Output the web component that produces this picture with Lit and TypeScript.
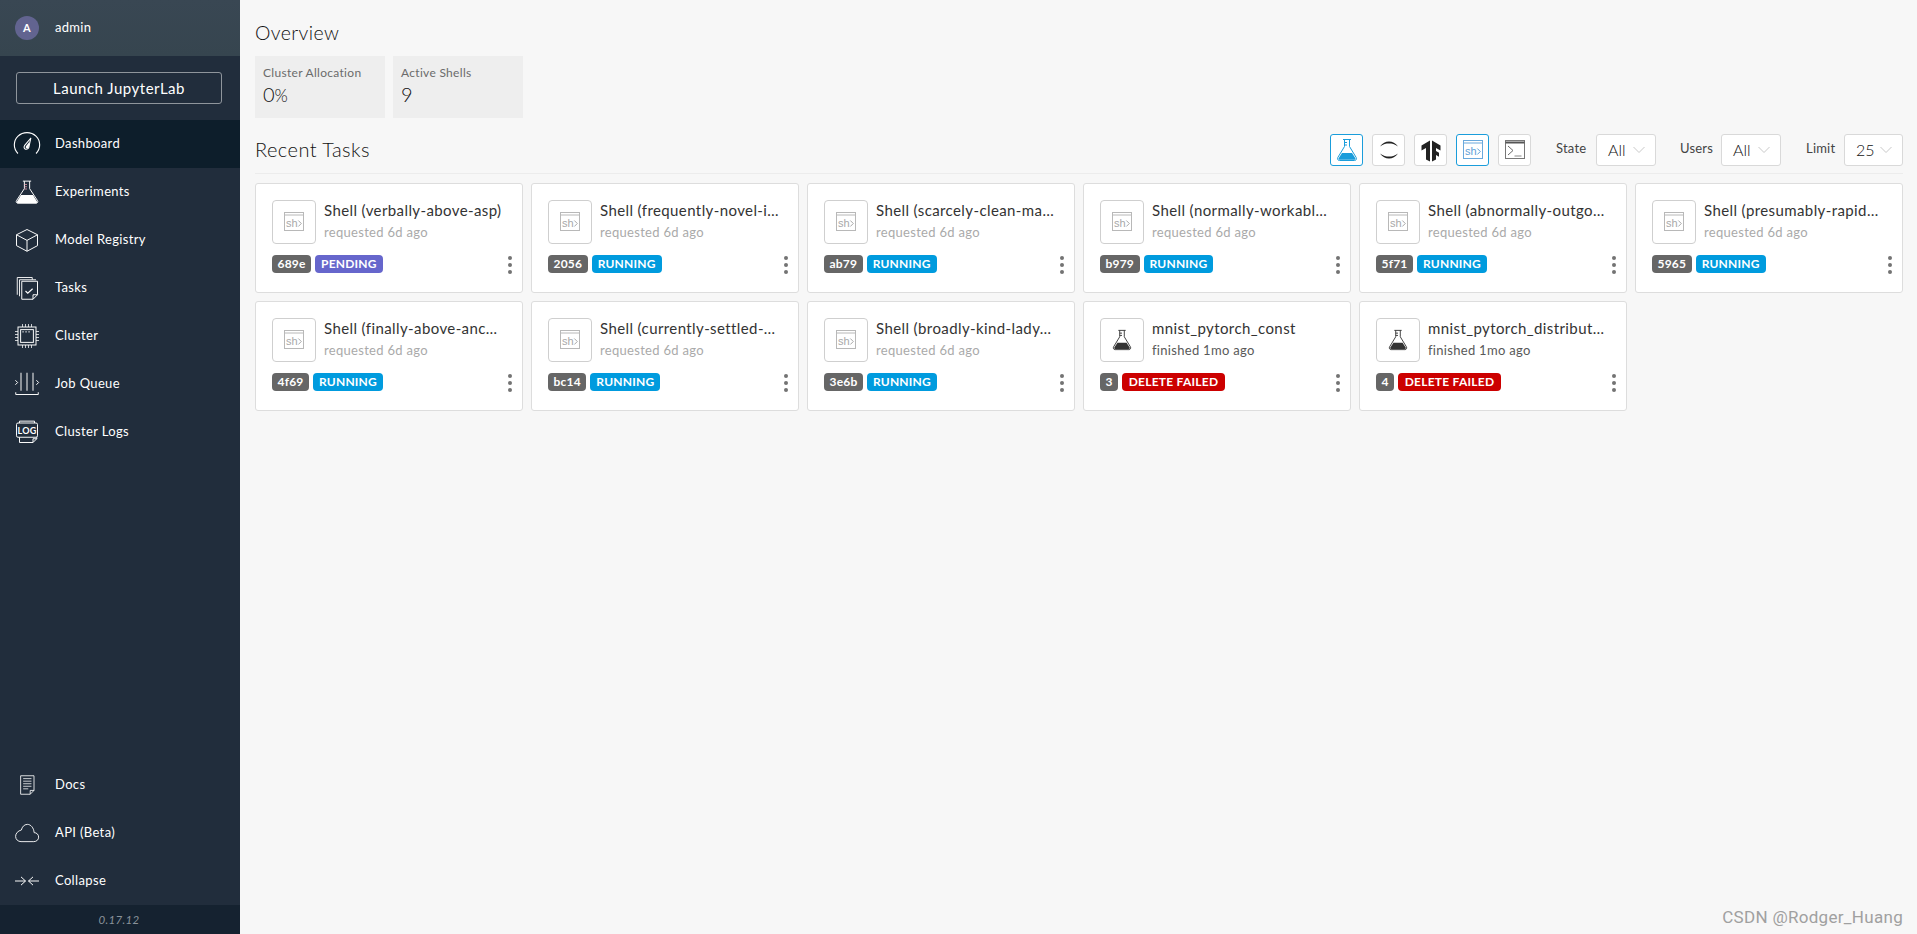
import { LitElement, html, css, svg } from "lit";
import { customElement } from "lit/decorators.js";

const navIcons: Record<string, any> = {
  dashboard: svg`<path d="M5.500 27C2.800 24.300 1.300 20.800 1.300 17 1.300 8.900 7.900 2.800 16 2.800S30.700 8.900 30.700 17c0 3.800-1.500 7.300-4.200 10" fill="none" stroke="#fff" stroke-width="1.300"/><path d="M20.500 9l-2.300 10.500c-.5 2-2.300 3-3.900 2.500-1.700-.6-2.200-2.400-1.200-4.100z" fill="none" stroke="#fff" stroke-width="1.200"/><path d="M19 13l-1 6.500c-.4 1.400-1.500 2-2.500 1.700-1-.4-1.300-1.300-.7-2.500z" fill="#fff"/>`,
  experiments: svg`<path d="M10.500 1.500h11M12.500 1.500v10L2 27.500c-1 1.700 0 3.500 2 3.500h24c2 0 3-1.800 2-3.500L19.500 11.500v-10" fill="none" stroke="#fff" stroke-width="1.300"/><path d="M8 20h16l5.500 9c.4.800 0 1.500-1 1.500h-25c-1 0-1.400-.7-1-1.500z" fill="#fff"/><path d="M12.500 6h3.500M12.500 9h3.500M12.500 12h3.500" stroke="#f0a0b0" stroke-width="1"/>`,
  model: svg`<path d="M16 2L30 9v14.500L16 31 2 23.500V9zM2 9l14 7.500L30 9M16 16.500V31" fill="none" stroke="#fff" stroke-width="1.300" stroke-linejoin="round"/>`,
  tasks: svg`<path d="M3 25V2h20v3M6 27V5h22" fill="none" stroke="#fff" stroke-width="1.200"/><path d="M9 7h21v18l-6 6H9zM30 25h-6v6" fill="none" stroke="#fff" stroke-width="1.300"/><path d="M14 20l3 3 6.500-6" fill="none" stroke="#fff" stroke-width="1.500"/>`,
  cluster: svg`<rect x="4" y="4" width="24" height="24" fill="none" stroke="#fff" stroke-width="1.300"/><rect x="7.500" y="7.500" width="17" height="17" fill="none" stroke="#fff" stroke-width="1.300"/><path d="M9.500 10.500h2.500M13.500 10.500h2.500M17.500 10.500h2.500M10 0v4M14 0v4M18 0v4M22 0v4M10 28v4M14 28v4M18 28v4M22 28v4M0 10h4M0 14h4M0 18h4M0 22h4M28 10h4M28 14h4M28 18h4M28 22h4" fill="none" stroke="#fff" stroke-width="1"/>`,
  queue: svg`<path d="M8 1v24M16 1v24M24 1v24" fill="none" stroke="#fff" stroke-width="1.300"/><path d="M1 27v3h30v-3M.5 11l3 3-3 3M28.500 11l3 3-3 3" fill="none" stroke="#fff" stroke-width="1.300"/>`,
  logs: svg`<path d="M6 4V1.500h20V4M6 23v7h18l5-5v-2M29 25h-5v5" fill="none" stroke="#fff" stroke-width="1.300"/><rect x="2" y="4" width="28" height="19" rx="2" fill="none" stroke="#fff" stroke-width="1.300"/><text x="16" y="18" font-size="12" font-weight="700" text-anchor="middle" fill="#fff" font-family="Lato, sans-serif">LOG</text>`,
  docs: svg`<path d="M6 1.500h21v23l-6 6H6zM27 24.500h-6v6" fill="none" stroke="#fff" stroke-width="1.300"/><path d="M10 6h13M10 10h13M10 14h13M10 18h13M10 22h8" stroke="#fff" stroke-width="1.200"/>`,
  api: svg`<path d="M8 27.500h17c4 0 6.500-2.700 6.500-6 0-3.500-2.700-6-6-6C25 9 21 4.500 16.500 4.500 12 4.500 9.500 8 8.500 12 4 13 .8 16.500.8 20.500.8 24.500 4 27.500 8 27.500z" fill="none" stroke="#fff" stroke-width="1.200"/>`,
  collapse: svg`<path d="M0 16h14M8 10.500l6 5.500-6 5.500M32 16H18M24 10.500L18 16l6 5.500" fill="none" stroke="#fff" stroke-width="1.300"/>`,
};

const shellIcon = (c: string, t: string) => svg`<svg viewBox="0 0 24 24" width="24" height="24"><rect x="2.500" y="2.500" width="19" height="18" fill="none" stroke="${c}" stroke-width="1"/><path d="M2.500 5h19" stroke="${c}" stroke-width="1"/><text x="4" y="16.500" font-size="11" fill="${t}" font-family="'Liberation Sans', sans-serif">sh</text><path d="M16.300 10.500l3 3-3 3" fill="none" stroke="${t}" stroke-width="1"/></svg>`;

const flaskIcon = (c: string, size: number) => svg`<svg viewBox="0 0 24 24" width="${size}" height="${size}"><path d="M8 1.500h8M9.500 1.500v7L2.800 19.500c-.8 1.500 0 3 1.700 3h15c1.700 0 2.500-1.500 1.700-3L14.500 8.500v-7" fill="none" stroke="${c}" stroke-width="1"/><path d="M7 15h10l3.500 5.500c.3.800-.2 1.300-1 1.300h-15c-.8 0-1.300-.5-1-1.300z" fill="${c}"/><path d="M9.500 4.500h2.500M9.500 7h2.500" stroke="${c}" stroke-width="1"/></svg>`;

type Task = { name: string; kind: "shell" | "exp"; time: string; id: string; state: string };
const shell = (name: string, id: string, state = "RUNNING"): Task => ({ name: `Shell (${name}`, kind: "shell", time: "requested 6d ago", id, state });
const tasks: Task[] = [
  shell("verbally-above-asp)", "689e", "PENDING"),
  shell("frequently-novel-i…", "2056"),
  shell("scarcely-clean-ma…", "ab79"),
  shell("normally-workabl…", "b979"),
  shell("abnormally-outgo…", "5f71"),
  shell("presumably-rapid…", "5965"),
  shell("finally-above-anc…", "4f69"),
  shell("currently-settled-…", "bc14"),
  shell("broadly-kind-lady…", "3e6b"),
  { name: "mnist_pytorch_const", kind: "exp", time: "finished 1mo ago", id: "3", state: "DELETE FAILED" },
  { name: "mnist_pytorch_distribut…", kind: "exp", time: "finished 1mo ago", id: "4", state: "DELETE FAILED" },
];

const topNav: [string, string][] = [
  ["dashboard", "Dashboard"],
  ["experiments", "Experiments"],
  ["model", "Model Registry"],
  ["tasks", "Tasks"],
  ["cluster", "Cluster"],
  ["queue", "Job Queue"],
  ["logs", "Cluster Logs"],
];
const bottomNav: [string, string][] = [
  ["docs", "Docs"],
  ["api", "API (Beta)"],
  ["collapse", "Collapse"],
];

@customElement("app-root")
export class AppRoot extends LitElement {
  static styles = css`
    :host { display: flex; width: 1917px; height: 934px; overflow: hidden; background: #f7f7f7; font-family: Lato, "Open Sans", sans-serif; color: #262626; position: relative; }
    * { box-sizing: border-box; }
    .side { width: 240px; height: 934px; background: #212d3c; color: #fff; display: flex; flex-direction: column; flex: none; }
    .user { height: 56px; background: linear-gradient(#394753, #36454f); display: flex; align-items: center; padding-left: 15px; gap: 16px; font-size: 13px; letter-spacing: .3px; }
    .user span { padding-bottom: 2px; }
    .avatar { width: 24px; height: 24px; border-radius: 50%; background: #626490; display: flex; align-items: center; justify-content: center; font-size: 11px; font-weight: 700; padding-bottom: 1px; }
    .launch { height: 64px; padding: 16px 18px 17px 16px; }
    .launch div { height: 32px; border: 1px solid #8f959c; border-radius: 3px; display: flex; align-items: center; justify-content: center; font-size: 15px; letter-spacing: .5px; padding-bottom: 1px; }
    .item { height: 48px; display: flex; align-items: center; padding-left: 15px; gap: 16px; font-size: 13px; letter-spacing: .35px; }
    .item span { padding-bottom: 2px; }
    .item svg { width: 24px; height: 24px; flex: none; overflow: visible; }
    .item.dashboard svg { transform: scale(1.150); }
    .item.docs svg { transform: scale(.85); }
    .item.active { background: #0d1e2b; }
    .spacer { flex: 1; }
    .version { height: 29px; background: #152230; color: #8a929a; font-size: 11.500px; font-style: italic; display: flex; align-items: center; justify-content: center; letter-spacing: .3px; padding-right: 2px; }
    .main { flex: 1; padding: 0 14px 0 15px; min-width: 0; }
    h1 { margin: 0; font-weight: 300; font-size: 19.500px; line-height: 24px; padding: 21px 0 0 0; height: 56px; letter-spacing: .4px; color: #111; }
    .stats { display: flex; gap: 8px; }
    .stat { width: 130px; height: 62px; background: #eeeeee; padding: 8px; }
    .stat .l { font-size: 12px; line-height: 16px; color: #6b6b6b; letter-spacing: .3px; padding-top: 1px; }
    .stat .v { font-size: 20px; line-height: 24px; margin-top: 1px; font-weight: 300; color: #111; }
    .stat .v small { font-size: 17px; }
    .head { display: flex; align-items: center; height: 56px; border-bottom: 1px solid #ececec; padding: 9px 0 0 0; margin-bottom: 8.500px; }
    .head h2 { margin: 0; font-weight: 300; font-size: 20px; flex: 1; letter-spacing: .45px; padding-bottom: 2px; color: #111; }
    .type { width: 33px; height: 32px; border: 1px solid #d9d9d9; border-radius: 3px; background: #fff; display: flex; align-items: center; justify-content: center; margin-right: 9px; }
    .type.on { border-color: #1a9ddb; }
    .lab { font-size: 13px; color: #444; letter-spacing: .2px; padding-bottom: 4px; white-space: nowrap; }
    .lab.state { width: 31px; margin-left: 16px; }
    .lab.users { width: 32px; margin-left: 24px; }
    .lab.limit { width: 29px; margin-left: 25px; }
    .sel { height: 32px; border: 1px solid #d9d9d9; border-radius: 3px; background: #fff; display: flex; align-items: center; justify-content: space-between; padding: 0 10px 0 11px; font-size: 16px; font-weight: 300; margin-left: 9px; color: #111; }
    .sel span { padding-bottom: 2px; }
    .grid { display: grid; grid-template-columns: repeat(6, 268px); gap: 8px; }
    .card { height: 110px; background: #fff; border: 1px solid #dddddd; border-radius: 3px; padding: 16px; position: relative; }
    .top { display: flex; gap: 8px; height: 44px; }
    .ico { width: 44px; height: 44px; border: 1px solid #cfcfcf; border-radius: 4px; display: flex; align-items: center; justify-content: center; flex: none; }
    .info { min-width: 0; flex: 1; }
    .name { font-size: 15px; line-height: 20px; white-space: nowrap; letter-spacing: .4px; height: 23px; color: #333; }
    .time { font-size: 13px; line-height: 18px; color: #aaa; letter-spacing: .3px; }
    .time.done { color: #595959; }
    .bot { display: flex; gap: 4px; margin-top: 11px; }
    .tag { height: 18px; border-radius: 4px; color: #fff; font-size: 12px; font-weight: 700; padding: 0 6px; line-height: 18px; letter-spacing: .2px; white-space: nowrap; }
    .tag.id { background: #666; padding: 0 5.500px; }
    .tag.PENDING { background: #6666cc; }
    .tag.RUNNING { background: #009bde; }
    .tag.DELETE { background: #cc0000; padding: 0 6.500px; letter-spacing: .25px; }
    .dots { position: absolute; right: 10px; bottom: 18px; display: flex; flex-direction: column; gap: 3px; }
    .dots i { width: 4px; height: 4px; border-radius: 50%; background: #737373; display: block; }
    .mark { position: absolute; right: 14px; bottom: 7px; font-family: Roboto, sans-serif; font-size: 17px; color: #a0a0a0; letter-spacing: .3px; }
  `;

  private nav(items: [string, string][]) {
    return items.map(
      ([k, label]) => html`<div class="item ${k} ${k === "dashboard" ? "active" : ""}">
        <svg viewBox="0 0 32 32">${navIcons[k]}</svg><span>${label}</span>
      </div>`
    );
  }

  private select(v: string, w: number) {
    return html`<div class="sel" style="width:${w}px"><span>${v}</span>
      <svg width="12" height="8" viewBox="0 0 12 8"><path d="M.5 1l5.500 5.500L11.500 1" fill="none" stroke="#c8c8c8"/></svg></div>`;
  }

  private card(t: Task) {
    const tagCls = t.state.split(" ")[0];
    return html`<div class="card">
      <div class="top">
        <div class="ico">${t.kind === "shell" ? shellIcon("#b8b8b8", "#a8a8a8") : flaskIcon("#333", 22)}</div>
        <div class="info">
          <div class="name">${t.name}</div>
          <div class="time ${t.kind === "exp" ? "done" : ""}">${t.time}</div>
        </div>
      </div>
      <div class="bot"><span class="tag id">${t.id}</span><span class="tag ${tagCls}">${t.state}</span></div>
      <div class="dots"><i></i><i></i><i></i></div>
    </div>`;
  }

  render() {
    return html`
      <aside class="side">
        <div class="user"><div class="avatar">A</div><span>admin</span></div>
        <div class="launch"><div>Launch JupyterLab</div></div>
        ${this.nav(topNav)}
        <div class="spacer"></div>
        ${this.nav(bottomNav)}
        <div class="version">0.17.12</div>
      </aside>
      <main class="main">
        <h1>Overview</h1>
        <div class="stats">
          <div class="stat"><div class="l">Cluster Allocation</div><div class="v">0<small>%</small></div></div>
          <div class="stat"><div class="l">Active Shells</div><div class="v">9</div></div>
        </div>
        <div class="head">
          <h2>Recent Tasks</h2>
          <div class="type on">${flaskIcon("#1a9ddb", 24)}</div>
          <div class="type"><svg viewBox="0 0 24 24" width="24" height="24"><path d="M3 8.500C5.500 5 8.500 3.500 12 3.500S18.500 5 21 8.500C17.500 6 15 5.500 12 5.500S6.500 6 3 8.500z" fill="#222"/><path d="M3 15.500C5.500 19 8.500 20.500 12 20.500s6.500-1.500 9-5c-3.500 2.500-6 3-9 3s-5.500-.5-9-3z" fill="#222"/></svg></div>
          <div class="type"><svg viewBox="0 0 24 24" width="24" height="24"><path d="M11 2.500L2.500 7.500v5l4.500-2.500v11.500l4 2zM13 2.500l8.500 5v5L17 10v3l3 1.700v4L17 17v4.500l-4 2z" fill="#222"/></svg></div>
          <div class="type on">${shellIcon("#6aa9dc", "#5f9fd8")}</div>
          <div class="type"><svg viewBox="0 0 24 24" width="24" height="24"><rect x="2.500" y="2.500" width="19" height="18" fill="none" stroke="#777" stroke-width="1"/><path d="M2.500 4.500h19" stroke="#555" stroke-width="2"/><path d="M5 8l5 4.500L5 17" fill="none" stroke="#6b6b6b" stroke-width="1"/><path d="M11.500 18h7" stroke="#888" stroke-width="1"/></svg></div>
          <span class="lab state">State</span>${this.select("All", 60)}
          <span class="lab users">Users</span>${this.select("All", 60)}
          <span class="lab limit">Limit</span>${this.select("25", 59)}
        </div>
        <div class="grid">${tasks.map((t) => this.card(t))}</div>
      </main>
      <div class="mark">CSDN @Rodger_Huang</div>
    `;
  }
}
